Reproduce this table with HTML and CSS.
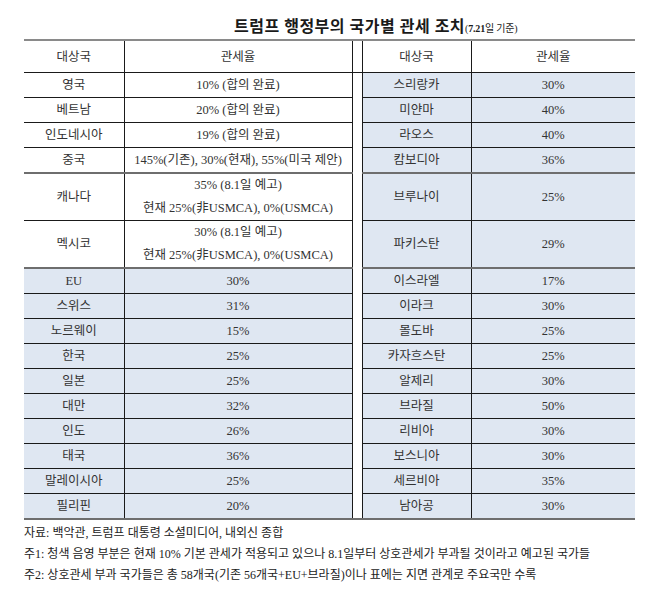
FILE: index.html
```html
<!DOCTYPE html>
<html lang="ko">
<head>
<meta charset="utf-8">
<title>트럼프 행정부의 국가별 관세 조치</title>
<link rel="stylesheet" href="styles.css">
</head>
<body>
<div class="page">
  <h1 class="title">트럼프 행정부의 국가별 관세 조치<span class="sub">(<b>7.21</b>일 기준)</span></h1>
  <table class="tariff">
    <colgroup>
      <col class="c-country"><col class="c-rate"><col class="c-gap"><col class="c-country2"><col class="c-rate2">
    </colgroup>
    <thead>
      <tr class="head">
        <th>대상국</th><th>관세율</th><th class="gap"></th><th>대상국</th><th>관세율</th>
      </tr>
    </thead>
    <tbody>
      <tr><td>영국</td><td>10% (합의 완료)</td><td class="gap"></td><td class="b">스리랑카</td><td class="b">30%</td></tr>
      <tr><td>베트남</td><td>20% (합의 완료)</td><td class="gap"></td><td class="b">미얀마</td><td class="b">40%</td></tr>
      <tr><td>인도네시아</td><td>19% (합의 완료)</td><td class="gap"></td><td class="b">라오스</td><td class="b">40%</td></tr>
      <tr><td>중국</td><td>145%(기존), 30%(현재), 55%(미국 제안)</td><td class="gap"></td><td class="b">캄보디아</td><td class="b">36%</td></tr>
      <tr class="tall sep"><td>캐나다</td><td>35% (8.1일 예고)<br>현재 25%(非USMCA), 0%(USMCA)</td><td class="gap"></td><td class="b">브루나이</td><td class="b">25%</td></tr>
      <tr class="tall"><td>멕시코</td><td>30% (8.1일 예고)<br>현재 25%(非USMCA), 0%(USMCA)</td><td class="gap"></td><td class="b">파키스탄</td><td class="b">29%</td></tr>
      <tr class="sep"><td class="b">EU</td><td class="b">30%</td><td class="gap"></td><td class="b">이스라엘</td><td class="b">17%</td></tr>
      <tr><td class="b">스위스</td><td class="b">31%</td><td class="gap"></td><td class="b">이라크</td><td class="b">30%</td></tr>
      <tr><td class="b">노르웨이</td><td class="b">15%</td><td class="gap"></td><td class="b">몰도바</td><td class="b">25%</td></tr>
      <tr><td class="b">한국</td><td class="b">25%</td><td class="gap"></td><td class="b">카자흐스탄</td><td class="b">25%</td></tr>
      <tr><td class="b">일본</td><td class="b">25%</td><td class="gap"></td><td class="b">알제리</td><td class="b">30%</td></tr>
      <tr><td class="b">대만</td><td class="b">32%</td><td class="gap"></td><td class="b">브라질</td><td class="b">50%</td></tr>
      <tr><td class="b">인도</td><td class="b">26%</td><td class="gap"></td><td class="b">리비아</td><td class="b">30%</td></tr>
      <tr><td class="b">태국</td><td class="b">36%</td><td class="gap"></td><td class="b">보스니아</td><td class="b">30%</td></tr>
      <tr><td class="b">말레이시아</td><td class="b">25%</td><td class="gap"></td><td class="b">세르비아</td><td class="b">35%</td></tr>
      <tr class="last"><td class="b">필리핀</td><td class="b">20%</td><td class="gap"></td><td class="b">남아공</td><td class="b">30%</td></tr>
    </tbody>
  </table>
  <div class="notes">
    <p>자료: 백악관, 트럼프 대통령 소셜미디어, 내외신 종합</p>
    <p>주1: 청색 음영 부분은 현재 10% 기본 관세가 적용되고 있으나 8.1일부터 상호관세가 부과될 것이라고 예고된 국가들</p>
    <p>주2: 상호관세 부과 국가들은 총 58개국(기존 56개국+EU+브라질)이나 표에는 지면 관계로 주요국만 수록</p>
  </div>
</div>
</body>
</html>
```
FILE: styles.css
```css
html, body {
  margin: 0;
  padding: 0;
  background: #ffffff;
}
body {
  font-family: "Liberation Serif", "Noto Sans CJK KR", serif;
  color: #333333;
}
.page {
  width: 670px;
  padding: 0 0 0 24px;
  box-sizing: border-box;
}
.title {
  margin: 0;
  height: 39px;
  padding-left: 210px;
  padding-top: 16px;
  box-sizing: border-box;
  font-size: 16px;
  line-height: 21px;
  font-weight: bold;
  color: #1a1a1a;
  letter-spacing: 0.5px;
  white-space: nowrap;
}
.title .sub {
  font-size: 10px;
  font-weight: normal;
  letter-spacing: -0.2px;
}
.title .sub b {
  font-weight: bold;
}
.tariff {
  border-collapse: collapse;
  table-layout: fixed;
  width: 611px;
  font-size: 12.5px;
}
.c-country { width: 100px; }
.c-rate { width: 228px; }
.c-gap { width: 10px; }
.c-country2 { width: 109px; }
.c-rate2 { width: 164px; }
.tariff th, .tariff td {
  padding: 0;
  text-align: center;
  vertical-align: middle;
  border-top: 1px solid #1a1a1a;
  border-left: 1px solid #1a1a1a;
  border-right: 1px solid #1a1a1a;
  height: 24px;
  line-height: 16px;
  white-space: nowrap;
}
.tariff th {
  font-weight: normal;
  height: 31px;
  border-top: 2px solid #8a8a8a;
  border-bottom: 1px solid #1a1a1a;
}
.tariff tr > :first-child { border-left: none; }
.tariff tr > :last-child { border-right: none; }
.tariff td.gap {
  border-top: none;
  border-bottom: none;
  background: #ffffff;
}
.tariff .head th.gap {
  border-top: 2px solid #8a8a8a;
  border-bottom: 1px solid #1a1a1a;
}
.tariff .b { background: #dfe7f2; }
.tariff tr.tall td {
  height: 46px;
  line-height: 23px;
}
.tariff tr.sep td { border-top: 2px solid #6e6e6e; }
.tariff tr.sep td.gap { border-top: none; }
.tariff tr.last td { border-bottom: 2px solid #6e6e6e; }
.tariff tr.last td.gap { border-bottom: 2px solid #6e6e6e; }
.notes {
  padding-top: 3px;
  font-size: 12px;
  color: #222;
}
.notes p {
  margin: 0;
  line-height: 21px;
  white-space: nowrap;
}
```
